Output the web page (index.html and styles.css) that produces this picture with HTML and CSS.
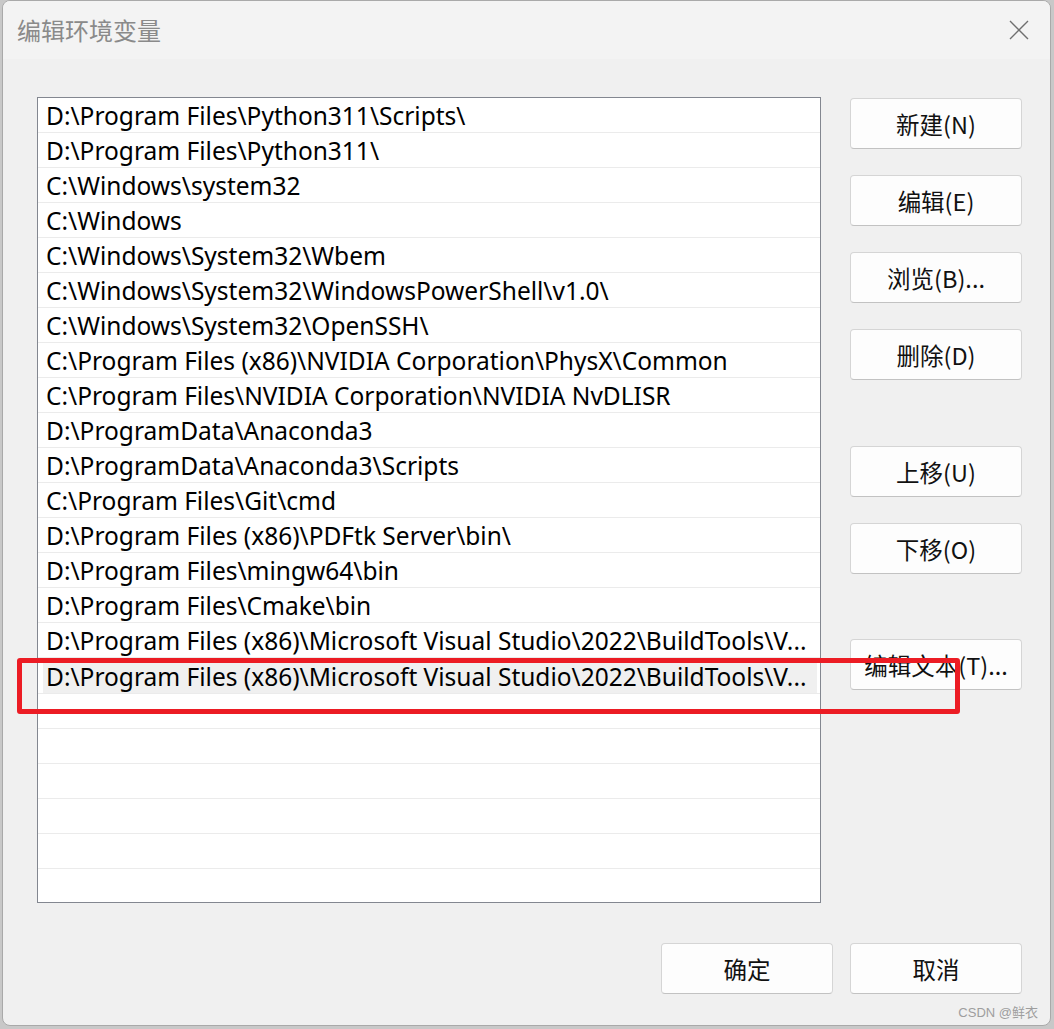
FILE: index.html
```html
<!DOCTYPE html>
<html lang="zh-CN">
<head>
    <meta charset="UTF-8">
    <title>编辑环境变量</title>
    <link rel="stylesheet" href="styles.css">
</head>
<body>
    <div class="dialog">
        <div class="title-bar">
            <span class="title">编辑环境变量</span>
            <svg class="close" width="20" height="20" viewBox="0 0 20 20">
                <path d="M1 1 L19 19 M19 1 L1 19" stroke="#6f6f6f" stroke-width="1.4" fill="none"/>
            </svg>
        </div>
        <div class="content">
            <div class="path-list">
                <div class="row"><span>D:\Program Files\Python311\Scripts\</span></div>
                <div class="row"><span>D:\Program Files\Python311\</span></div>
                <div class="row"><span>C:\Windows\system32</span></div>
                <div class="row"><span>C:\Windows</span></div>
                <div class="row"><span>C:\Windows\System32\Wbem</span></div>
                <div class="row"><span>C:\Windows\System32\WindowsPowerShell\v1.0\</span></div>
                <div class="row"><span>C:\Windows\System32\OpenSSH\</span></div>
                <div class="row"><span>C:\Program Files (x86)\NVIDIA Corporation\PhysX\Common</span></div>
                <div class="row"><span>C:\Program Files\NVIDIA Corporation\NVIDIA NvDLISR</span></div>
                <div class="row"><span>D:\ProgramData\Anaconda3</span></div>
                <div class="row"><span>D:\ProgramData\Anaconda3\Scripts</span></div>
                <div class="row"><span>C:\Program Files\Git\cmd</span></div>
                <div class="row"><span>D:\Program Files (x86)\PDFtk Server\bin\</span></div>
                <div class="row"><span>D:\Program Files\mingw64\bin</span></div>
                <div class="row"><span>D:\Program Files\Cmake\bin</span></div>
                <div class="row"><span>D:\Program Files (x86)\Microsoft Visual Studio\2022\BuildTools\V...</span></div>
                <div class="row selected"><span>D:\Program Files (x86)\Microsoft Visual Studio\2022\BuildTools\V...</span></div>
                <div class="row"></div>
                <div class="row"></div>
                <div class="row"></div>
                <div class="row"></div>
                <div class="row"></div>
                <div class="row"></div>
            </div>
            <div class="side-buttons">
                <button>新建(N)</button>
                <button>编辑(E)</button>
                <button>浏览(B)...</button>
                <button>删除(D)</button>
                <button class="group">上移(U)</button>
                <button>下移(O)</button>
                <button class="group">编辑文本(T)...</button>
            </div>
        </div>
        <div class="footer">
            <button>确定</button>
            <button>取消</button>
        </div>
        <div class="highlight"></div>
        <div class="watermark">CSDN @鲜衣</div>
    </div>
</body>
</html>
```

FILE: styles.css
```css
body {
    margin: 0;
    background: #c8c8c8;
    font-family: "Noto Sans", "Noto Sans CJK SC", sans-serif;
    overflow: hidden;
}

.dialog {
    position: relative;
    margin-left: 2px;
    width: 1049px;
    height: 1026px;
    box-sizing: border-box;
    background: #f0f0f0;
    border: 1px solid #a9a9a9;
    border-radius: 8px;
    overflow: hidden;
}

.title-bar {
    height: 58px;
    background: #f3f3f3;
    display: flex;
    justify-content: space-between;
    align-items: center;
    padding: 0 21px 0 14px;
}

.title {
    font-family: "Noto Sans CJK SC", sans-serif;
    font-size: 24px;
    color: #8a8a8a;
    margin-top: -1px;
}

.close {
    display: block;
}

.content {
    display: flex;
    gap: 29px;
    padding: 38px 28px 0 34px;
}

.path-list {
    width: 784px;
    height: 806px;
    box-sizing: border-box;
    background: #fff;
    border: 1px solid #838790;
    overflow: hidden;
    flex-shrink: 0;
}

.row {
    height: 35px;
    box-sizing: border-box;
    border-bottom: 1px solid #ebebeb;
    font-size: 24.5px;
    line-height: 36px;
    white-space: nowrap;
    color: #000;
}

.row span {
    display: block;
    padding-left: 8px;
}

.row.selected span {
    margin: 1px 3px 0 5px;
    padding-left: 3px;
    height: 34px;
    line-height: 35px;
    background: #f0f0f0;
}

.side-buttons {
    display: flex;
    flex-direction: column;
    gap: 26px;
    padding-top: 1px;
}

button {
    width: 172px;
    height: 51px;
    box-sizing: border-box;
    background: #fdfdfd;
    border: 1px solid #d5d5d5;
    border-bottom-color: #c2c2c2;
    border-radius: 4px;
    font-family: "Noto Sans CJK SC", sans-serif;
    font-size: 23.5px;
    color: #111;
    padding: 0;
}

.side-buttons .group {
    margin-top: 40px;
}

.side-buttons .group:last-child {
    margin-top: 39px;
}

.footer {
    display: flex;
    justify-content: flex-end;
    gap: 17px;
    padding-right: 28px;
    margin-top: 40px;
}

.highlight {
    position: absolute;
    left: 14px;
    top: 657px;
    width: 943px;
    height: 56px;
    box-sizing: border-box;
    border: 5px solid #ec1c24;
    border-radius: 3px;
}

.watermark {
    position: absolute;
    right: 12px;
    bottom: 4px;
    font-family: "Liberation Sans", "Noto Sans CJK SC", sans-serif;
    font-size: 13px;
    color: #9e9e9e;
}
```
